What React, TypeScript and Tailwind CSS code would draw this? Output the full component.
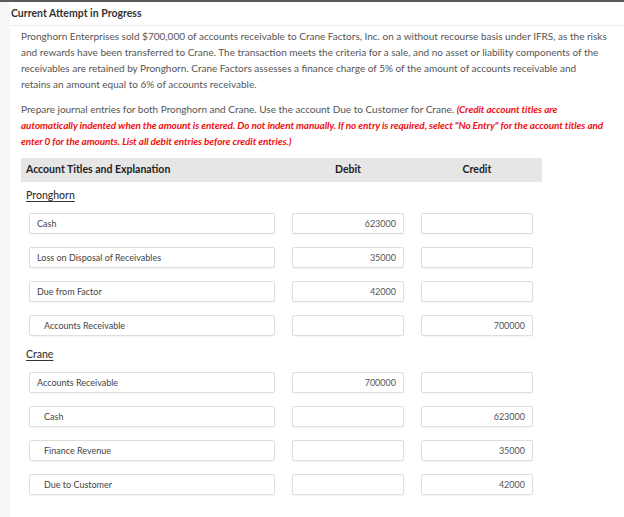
const pronghorn = [
  { title: "Cash", debit: "623000", credit: "", indent: false },
  { title: "Loss on Disposal of Receivables", debit: "35000", credit: "", indent: false },
  { title: "Due from Factor", debit: "42000", credit: "", indent: false },
  { title: "Accounts Receivable", debit: "", credit: "700000", indent: true },
];

const crane = [
  { title: "Accounts Receivable", debit: "700000", credit: "", indent: false },
  { title: "Cash", debit: "", credit: "623000", indent: true },
  { title: "Finance Revenue", debit: "", credit: "35000", indent: true },
  { title: "Due to Customer", debit: "", credit: "42000", indent: true },
];

type Entry = { title: string; debit: string; credit: string; indent: boolean };

function EntryRow({ entry }: { entry: Entry }) {
  return (
    <div className="flex gap-[17px] pl-[8px]">
      <div
        className={`flex h-[21px] w-[246px] items-center rounded-[2px] border border-[#dedede] bg-white text-[9px] text-[#444] shadow-[0_1px_1px_rgba(0,0,0,0.04)] ${
          entry.indent ? "pl-[14px]" : "pl-[7px]"
        }`}
      >
        {entry.title}
      </div>
      <div className="flex h-[21px] w-[112px] items-center justify-end rounded-[2px] border border-[#dedede] bg-white pr-[7px] text-[9px] text-[#555] shadow-[0_1px_1px_rgba(0,0,0,0.04)]">
        {entry.debit}
      </div>
      <div className="flex h-[21px] w-[112px] items-center justify-end rounded-[2px] border border-[#dedede] bg-white pr-[7px] text-[9px] text-[#555] shadow-[0_1px_1px_rgba(0,0,0,0.04)]">
        {entry.credit}
      </div>
    </div>
  );
}

function Section({ name, entries }: { name: string; entries: Entry[] }) {
  return (
    <div className="flex flex-col">
      <div className="pl-[5px] text-[10.5px] leading-[16px] font-medium text-[#333] underline underline-offset-2">
        {name}
      </div>
      <div className="mt-[10px] flex flex-col gap-[13px]">
        {entries.map((e, i) => (
          <EntryRow key={i} entry={e} />
        ))}
      </div>
    </div>
  );
}

export default function App() {
  return (
    <div
      className="flex h-[517px] w-[624px] overflow-hidden border-t-2 border-[#5a5a5a] bg-white"
      style={{ fontFamily: "Lato, 'Open Sans', sans-serif" }}
    >
      <div className="w-[10px] shrink-0 bg-[#f6f6f6]" />
      <div className="flex flex-1 flex-col">
        <div className="flex h-[24px] items-center border-b border-[#ececec] pl-[1px] text-[10.5px] font-bold text-[#333]">
          Current Attempt in Progress
        </div>
        <div className="flex flex-col pl-[11px] pr-[15px]">
          <p className="mt-[2px] text-[10px] leading-[16px] text-[#555]">
            Pronghorn Enterprises sold $700,000 of accounts receivable to Crane Factors, Inc. on a without recourse basis under IFRS, as the risks and rewards have been transferred to Crane. The transaction meets the criteria for a sale, and no asset or liability components of the receivables are retained by Pronghorn. Crane Factors assesses a finance charge of 5% of the amount of accounts receivable and
            <br />
            retains an amount equal to 6% of accounts receivable.
          </p>
          <p className="mt-[9px] pr-[3px] text-[10px] leading-[16px] text-[#555]">
            Prepare journal entries for both Pronghorn and Crane. Use the account Due to Customer for Crane.{" "}
            <span className="font-bold italic tracking-[-0.1px] text-[#f01010]">
              (Credit account titles are automatically indented when the amount is entered. Do not indent manually. If no entry is required, select "No Entry" for the account titles and enter 0 for the amounts. List all debit entries before credit entries.)
            </span>
          </p>
          <div className="mt-[9px] flex h-[24px] w-[521px] items-center bg-[#e6e6e6] text-[10.5px] font-bold text-[#222]">
            <div className="w-[254px] pl-[5px]">Account Titles and Explanation</div>
            <div className="ml-[17px] w-[112px] text-center">Debit</div>
            <div className="ml-[17px] w-[112px] text-center">Credit</div>
          </div>
          <div className="mt-[5px]">
            <Section name="Pronghorn" entries={pronghorn} />
          </div>
          <div className="mt-[10px]">
            <Section name="Crane" entries={crane} />
          </div>
        </div>
      </div>
    </div>
  );
}
